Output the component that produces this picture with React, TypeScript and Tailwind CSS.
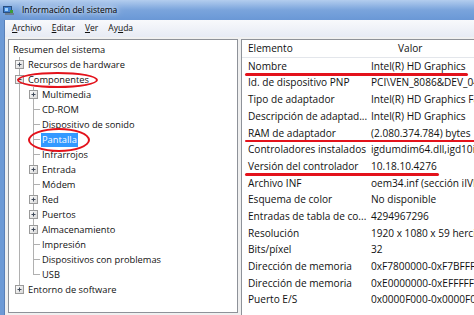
import React from "react";

type Node = {
  label: string;
  level: number;
  box?: "+" | "-";
  last?: boolean;
  selected?: boolean;
};

const tree: Node[] = [
  { label: "Resumen del sistema", level: 0 },
  { label: "Recursos de hardware", level: 1, box: "+" },
  { label: "Componentes", level: 1, box: "-" },
  { label: "Multimedia", level: 2, box: "+" },
  { label: "CD-ROM", level: 2 },
  { label: "Dispositivo de sonido", level: 2 },
  { label: "Pantalla", level: 2, selected: true },
  { label: "Infrarrojos", level: 2 },
  { label: "Entrada", level: 2, box: "+" },
  { label: "Módem", level: 2 },
  { label: "Red", level: 2, box: "+" },
  { label: "Puertos", level: 2, box: "+" },
  { label: "Almacenamiento", level: 2, box: "+" },
  { label: "Impresión", level: 2 },
  { label: "Dispositivos con problemas", level: 2 },
  { label: "USB", level: 2, last: true },
  { label: "Entorno de software", level: 1, box: "+", last: true },
];

const rows: { k: string; v: string; mark?: string }[] = [
  { k: "Nombre", v: "Intel(R) HD Graphics", mark: "w-[223px]" },
  { k: "Id. de dispositivo PNP", v: "PCI\\VEN_8086&DEV_0416&SUBSYS_" },
  { k: "Tipo de adaptador", v: "Intel(R) HD Graphics Family" },
  { k: "Descripción de adaptad...", v: "Intel(R) HD Graphics" },
  { k: "RAM de adaptador", v: "(2.080.374.784) bytes", mark: "w-[240px]" },
  { k: "Controladores instalados", v: "igdumdim64.dll,igd10iumd64.dll" },
  { k: "Versión del controlador", v: "10.18.10.4276", mark: "w-[194px]" },
  { k: "Archivo INF", v: "oem34.inf (sección iIVBM_w7)" },
  { k: "Esquema de color", v: "No disponible" },
  { k: "Entradas de tabla de co...", v: "4294967296" },
  { k: "Resolución", v: "1920 x 1080 x 59 hercios" },
  { k: "Bits/píxel", v: "32" },
  { k: "Dirección de memoria", v: "0xF7800000-0xF7BFFFFF" },
  { k: "Dirección de memoria", v: "0xE0000000-0xEFFFFFFF" },
  { k: "Puerto E/S", v: "0x0000F000-0x0000F03F" },
];

function ExpandBox({ sign }: { sign: "+" | "-" }) {
  return (
    <svg
      width="9"
      height="9"
      viewBox="0 0 9 9"
      className="absolute left-[6px] top-[3px]"
    >
      <defs>
        <linearGradient id="bx" x1="0" y1="0" x2="1" y2="1">
          <stop offset="0" stopColor="#ffffff" />
          <stop offset="1" stopColor="#d6d6d6" />
        </linearGradient>
      </defs>
      <rect x="0.5" y="0.5" width="8" height="8" fill="url(#bx)" stroke="#9a9a9a" />
      <path d="M2.5 4.5h4" stroke="#404a5a" />
      {sign === "+" && <path d="M4.5 2.5v4" stroke="#404a5a" />}
    </svg>
  );
}

function Cell({
  line,
  box,
  tick,
}: {
  line: "full" | "half";
  box?: "+" | "-";
  tick?: boolean;
}) {
  return (
    <span className="relative w-[14px] h-full shrink-0">
      <span
        className={
          line === "full"
            ? "absolute left-[10px] top-0 bottom-0 w-px bg-[#b0b0b0]"
            : "absolute left-[10px] top-0 h-[8px] w-px bg-[#b0b0b0]"
        }
      />
      {tick && (
        <span className="absolute left-[10px] top-[7px] w-[7px] h-px bg-[#b0b0b0]" />
      )}
      {box && <ExpandBox sign={box} />}
    </span>
  );
}

function TreeRow({ n }: { n: Node }) {
  return (
    <div className="flex h-[15px] items-center">
      {n.level === 0 && <span className="w-[4px]" />}
      {n.level === 1 && (
        <Cell line={n.last ? "half" : "full"} box={n.box} />
      )}
      {n.level === 2 && (
        <>
          <Cell line="full" />
          <Cell line={n.last ? "half" : "full"} box={n.box} tick={!n.box} />
        </>
      )}
      <span
        className={
          n.selected
            ? "ml-[4px] px-[1px] leading-[14px] bg-[#3399ff] text-white"
            : n.level === 0
              ? "leading-[14px]"
              : "ml-[5px] leading-[14px]"
        }
      >
        {n.label}
      </span>
    </div>
  );
}

export default function App() {
  return (
    <div className="w-[474px] h-[315px] overflow-hidden flex flex-col bg-[#6d9ad6] font-['Open_Sans',sans-serif] text-[#111]">
      {/* title bar */}
      <div className="h-[20px] shrink-0 flex items-center bg-gradient-to-b from-[#b3cdee] via-[#7aa4dc] to-[#6a98d6]">
        <svg width="11" height="10" viewBox="0 0 11 10" className="ml-[3px] mt-[1px]">
          <rect x="0.5" y="0.5" width="8" height="6" fill="#3d7fd1" stroke="#2a4f80" />
          <rect x="2" y="2" width="3" height="3" fill="#9fd0ff" />
          <rect x="2" y="7" width="9" height="2" fill="#6c7f95" />
          <rect x="7" y="4" width="3" height="3" fill="#3a9a3a" />
        </svg>
        <span className="ml-[8px] text-[8.5px] text-black [text-shadow:0_0_4px_#fff,0_0_8px_#fff]">
          Información del sistema
        </span>
      </div>

      <div className="flex-1 flex flex-col ml-[4px] bg-[#f0f0f0] border-l border-[#5a80b8]">
        {/* menu bar */}
        <div className="h-[17px] shrink-0 flex items-center gap-[10px] pl-[7px] text-[8.5px] bg-gradient-to-b from-[#f8f9fc] to-[#e7ebf4]">
          <span>
            <span className="underline">A</span>rchivo
          </span>
          <span>
            <span className="underline">E</span>ditar
          </span>
          <span>
            <span className="underline">V</span>er
          </span>
          <span>
            Ay<span className="underline">u</span>da
          </span>
        </div>

        <div className="flex-1 flex pt-[2px] min-h-0">
          {/* tree pane */}
          <div className="relative ml-[3px] w-[230px] mb-[2px] bg-white border border-[#8e9299] pt-[2px] text-[9.3px] whitespace-nowrap">
            {tree.map((n, i) => (
              <TreeRow key={i} n={n} />
            ))}
            <span className="absolute left-[8px] top-[32px] w-[81px] h-[16px] rounded-[50%] border-[2.5px] border-[#e3121b]" />
            <span className="absolute left-[19px] top-[88px] w-[62px] h-[24px] rounded-[50%] border-[2.5px] border-[#e3121b]" />
          </div>

          {/* list pane */}
          <div className="ml-[3px] flex-1 bg-white border-l border-t border-[#8e9299] text-[10.1px] whitespace-nowrap overflow-hidden">
            <div className="flex h-[18px] items-center border-b border-[#e3e6eb] pl-[6px]">
              <span className="w-[150px]">Elemento</span>
              <span>Valor</span>
            </div>
            {rows.map((r, i) => (
              <div key={i} className="relative flex h-[16.7px] items-center pl-[6px]">
                <span className="w-[123px] shrink-0">{r.k}</span>
                <span>{r.v}</span>
                {r.mark && (
                  <span
                    className={`absolute left-[3px] bottom-[-1px] h-[2.5px] rounded-full bg-[#e3121b] ${r.mark}`}
                  />
                )}
              </div>
            ))}
          </div>
        </div>
      </div>
    </div>
  );
}
